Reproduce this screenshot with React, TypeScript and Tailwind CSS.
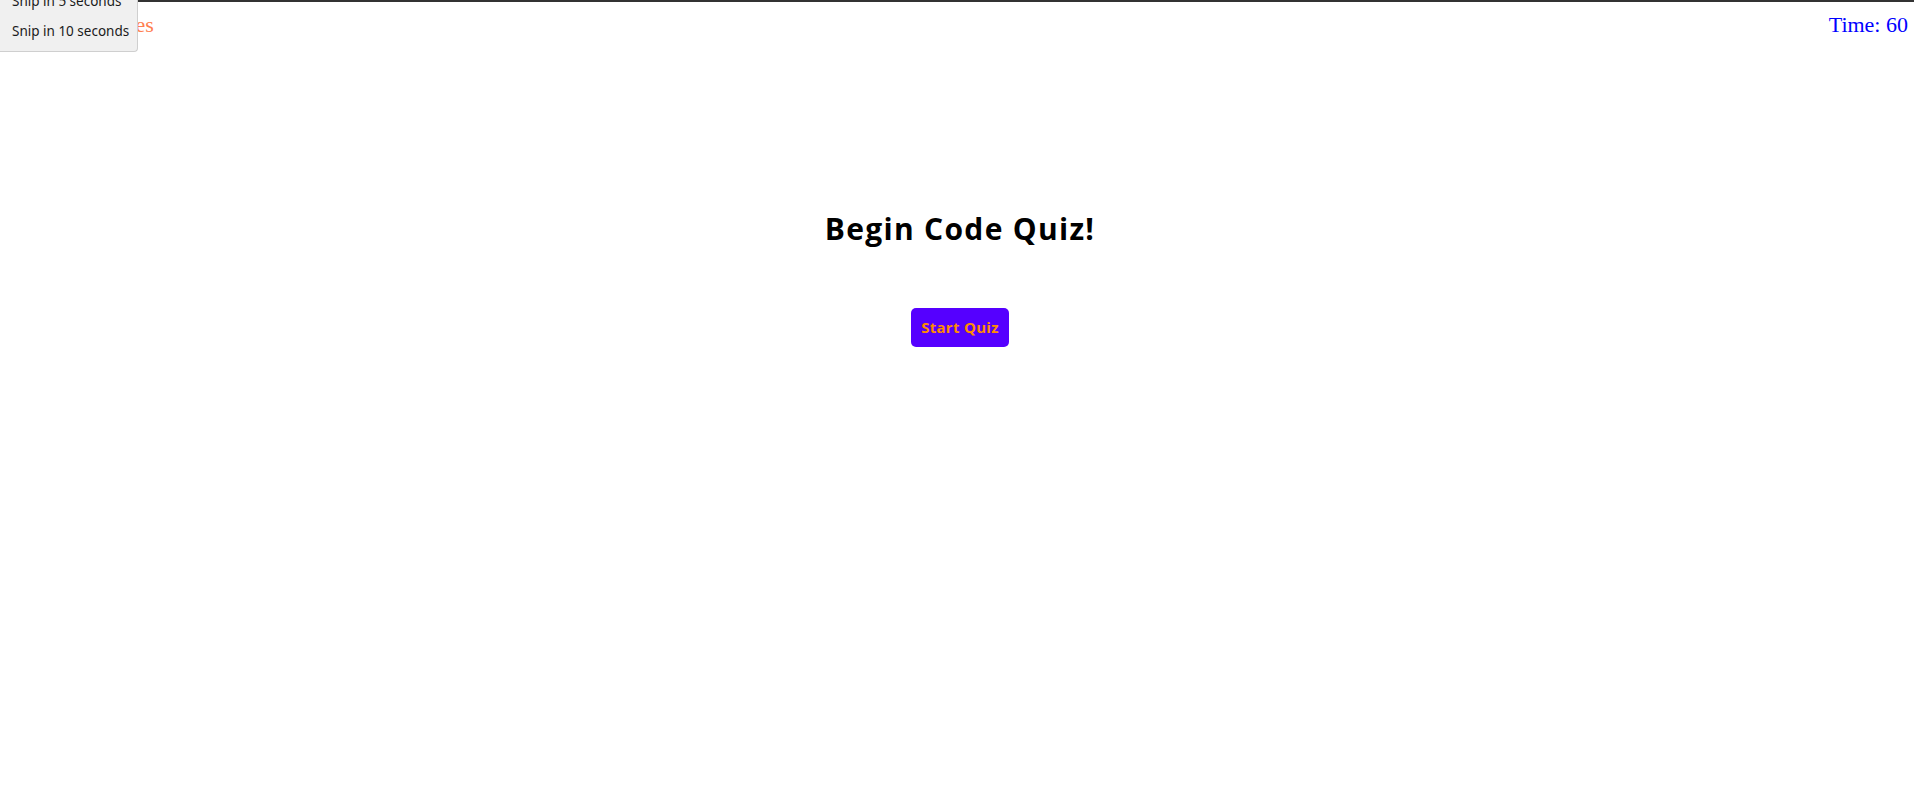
export default function App() {
  return (
    <div className="relative min-h-[790px] w-full bg-white border-t-2 border-[#333333]">
      {/* header bar */}
      <header className="flex items-start justify-between pl-[3px] pr-[6px] pt-[10px] text-[22px] leading-[25px] font-['Liberation_Serif',serif]">
        <span className="text-[#ff7f50]">View Highscores</span>
        <span className="text-[#0000ff]">Time: 60</span>
      </header>

      {/* quiz start panel */}
      <main className="flex flex-col items-center pl-[6px] pt-[172px] font-['Open_Sans',sans-serif]">
        <h1 className="text-[30px] leading-[40px] font-bold text-black tracking-[1.3px]">Begin Code Quiz!</h1>
        <button className="mt-[59px] h-[39px] w-[98px] rounded-[5px] bg-[#5500ff] text-[15px] font-bold tracking-[0.3px] text-[#ff8c00]">
          Start Quiz
        </button>
      </main>

      {/* snip delay menu */}
      <div className="absolute left-0 top-[-2px] z-10 w-[138px] h-[52px] overflow-hidden rounded-br-[4px] border-r border-b border-[#cfcfcf] bg-[#f0f0f0] font-['Noto_Sans',sans-serif] text-[13.5px] text-[#1a1a1a]">
        <div className="pl-[12px] leading-[30px] -mt-[14px]">Snip in 5 seconds</div>
        <div className="pl-[12px] leading-[30px]">Snip in 10 seconds</div>
      </div>
    </div>
  );
}
